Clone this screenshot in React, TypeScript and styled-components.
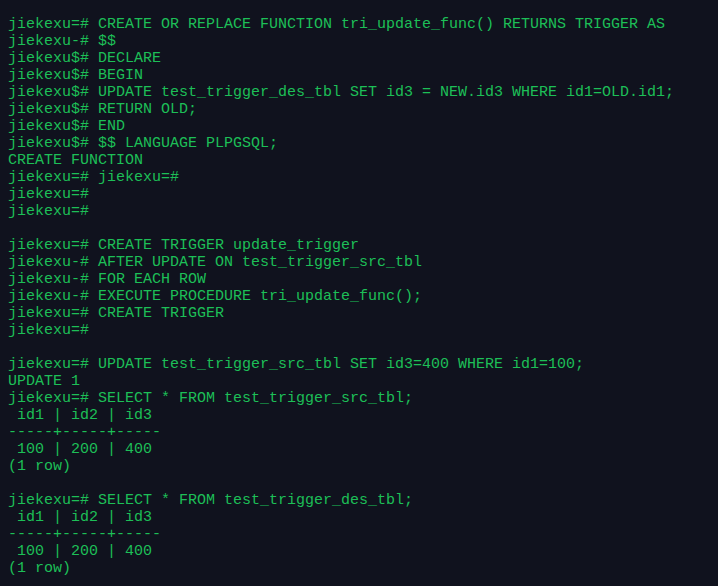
import React from "react";
import styled, { createGlobalStyle } from "styled-components";

const Global = createGlobalStyle`
  html, body { margin: 0; padding: 0; background: #10121e; }
  #root { min-height: 100vh; }
`;

const Terminal = styled.div`
  box-sizing: border-box;
  width: 718px;
  height: 586px;
  overflow: hidden;
  background: #10121e;
  padding: 16px 0 0 8px;
  display: flex;
  flex-direction: column;
`;

const Line = styled.pre`
  margin: 0;
  height: 17px;
  line-height: 17px;
  font-family: "Liberation Mono", "Courier New", monospace;
  font-size: 15px;
  color: #1dbf57;
  white-space: pre;
`;

const lines = [
  "jiekexu=# CREATE OR REPLACE FUNCTION tri_update_func() RETURNS TRIGGER AS",
  "jiekexu-# $$",
  "jiekexu$# DECLARE",
  "jiekexu$# BEGIN",
  "jiekexu$# UPDATE test_trigger_des_tbl SET id3 = NEW.id3 WHERE id1=OLD.id1;",
  "jiekexu$# RETURN OLD;",
  "jiekexu$# END",
  "jiekexu$# $$ LANGUAGE PLPGSQL;",
  "CREATE FUNCTION",
  "jiekexu=# jiekexu=#",
  "jiekexu=#",
  "jiekexu=#",
  "",
  "jiekexu=# CREATE TRIGGER update_trigger",
  "jiekexu-# AFTER UPDATE ON test_trigger_src_tbl",
  "jiekexu-# FOR EACH ROW",
  "jiekexu-# EXECUTE PROCEDURE tri_update_func();",
  "jiekexu=# CREATE TRIGGER",
  "jiekexu=#",
  "",
  "jiekexu=# UPDATE test_trigger_src_tbl SET id3=400 WHERE id1=100;",
  "UPDATE 1",
  "jiekexu=# SELECT * FROM test_trigger_src_tbl;",
  " id1 | id2 | id3",
  "-----+-----+-----",
  " 100 | 200 | 400",
  "(1 row)",
  "",
  "jiekexu=# SELECT * FROM test_trigger_des_tbl;",
  " id1 | id2 | id3",
  "-----+-----+-----",
  " 100 | 200 | 400",
  "(1 row)",
];

export default function App() {
  return (
    <>
      <Global />
      <Terminal>
        {lines.map((l, i) => (
          <Line key={i}>{l}</Line>
        ))}
      </Terminal>
    </>
  );
}
